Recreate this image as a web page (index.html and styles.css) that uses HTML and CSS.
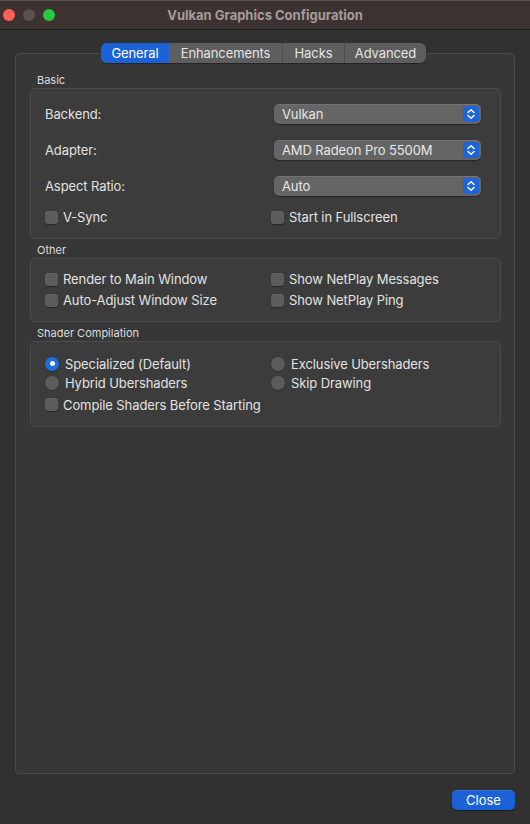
FILE: index.html
```html
<!DOCTYPE html>
<html lang="en">
<head>
<meta charset="utf-8">
<title>Vulkan Graphics Configuration</title>
<link rel="stylesheet" href="styles.css">
</head>
<body>
<div class="window">
  <header class="titlebar">
    <div class="lights">
      <span class="light red"></span>
      <span class="light gray"></span>
      <span class="light green"></span>
    </div>
    <div class="title">Vulkan Graphics Configuration</div>
    <div class="spacer"></div>
  </header>
  <main class="content">
    <nav class="tabs">
      <span class="tab tab-general active">General</span>
      <span class="tab tab-enh">Enhancements</span>
      <span class="tab tab-hacks">Hacks</span>
      <span class="tab tab-adv">Advanced</span>
    </nav>
    <section class="tabbox">
      <div class="group-label first">Basic</div>
      <div class="group basic">
        <div class="field-row">
          <span class="label">Backend:</span>
          <div class="popup"><span class="popup-text">Vulkan</span><span class="stepper"><svg viewBox="0 0 16 16" width="16" height="16"><path d="M5 6.5 L8 3.8 L11 6.5 M5 9.5 L8 12.2 L11 9.5" fill="none" stroke="#fff" stroke-width="1.5" stroke-linecap="round" stroke-linejoin="round"/></svg></span></div>
        </div>
        <div class="field-row">
          <span class="label">Adapter:</span>
          <div class="popup"><span class="popup-text">AMD Radeon Pro 5500M</span><span class="stepper"><svg viewBox="0 0 16 16" width="16" height="16"><path d="M5 6.5 L8 3.8 L11 6.5 M5 9.5 L8 12.2 L11 9.5" fill="none" stroke="#fff" stroke-width="1.5" stroke-linecap="round" stroke-linejoin="round"/></svg></span></div>
        </div>
        <div class="field-row">
          <span class="label">Aspect Ratio:</span>
          <div class="popup"><span class="popup-text">Auto</span><span class="stepper"><svg viewBox="0 0 16 16" width="16" height="16"><path d="M5 6.5 L8 3.8 L11 6.5 M5 9.5 L8 12.2 L11 9.5" fill="none" stroke="#fff" stroke-width="1.5" stroke-linecap="round" stroke-linejoin="round"/></svg></span></div>
        </div>
        <div class="check-row vsync-row">
          <label class="option"><span class="checkbox"></span><span>V-Sync</span></label>
          <label class="option"><span class="checkbox"></span><span>Start in Fullscreen</span></label>
        </div>
      </div>

      <div class="group-label">Other</div>
      <div class="group other">
        <div class="check-row">
          <label class="option"><span class="checkbox"></span><span>Render to Main Window</span></label>
          <label class="option"><span class="checkbox"></span><span>Show NetPlay Messages</span></label>
        </div>
        <div class="check-row">
          <label class="option"><span class="checkbox"></span><span>Auto-Adjust Window Size</span></label>
          <label class="option"><span class="checkbox"></span><span>Show NetPlay Ping</span></label>
        </div>
      </div>

      <div class="group-label">Shader Compilation</div>
      <div class="group shader">
        <div class="radio-row">
          <label class="option"><span class="radio checked"></span><span>Specialized (Default)</span></label>
          <label class="option"><span class="radio"></span><span>Exclusive Ubershaders</span></label>
        </div>
        <div class="radio-row">
          <label class="option"><span class="radio"></span><span>Hybrid Ubershaders</span></label>
          <label class="option"><span class="radio"></span><span>Skip Drawing</span></label>
        </div>
        <div class="radio-row compile-row">
          <label class="option"><span class="checkbox"></span><span>Compile Shaders Before Starting</span></label>
        </div>
      </div>
    </section>
    <footer class="footer">
      <button class="btn-close" type="button">Close</button>
    </footer>
  </main>
</div>
</body>
</html>
```

FILE: styles.css
```css
* {
  box-sizing: border-box;
}

html, body {
  margin: 0;
  padding: 0;
  background: #313131;
}

body {
  font-family: Inter, "Noto Sans", "Liberation Sans", sans-serif;
  font-size: 13px;
  color: #e2e2e2;
  letter-spacing: -0.1px;
}

.window {
  width: 530px;
  height: 824px;
  background: #313131;
  display: flex;
  flex-direction: column;
  overflow: hidden;
}

.titlebar {
  height: 30px;
  flex: 0 0 30px;
  background: #3c3232;
  border-top: 1px solid #5a5252;
  border-bottom: 1px solid #1c1a1a;
  display: grid;
  grid-template-columns: 1fr auto 1fr;
  align-items: center;
}

.lights {
  display: flex;
  gap: 8px;
  padding-left: 3px;
  align-items: center;
}

.light {
  width: 12px;
  height: 12px;
  border-radius: 50%;
  display: block;
}

.light.red { background: #fe5f57; }
.light.gray { background: #5a5150; }
.light.green { background: #2ac940; }

.title {
  font-weight: 700;
  font-size: 13px;
  color: #a69c9b;
  letter-spacing: 0;
}

.content {
  flex: 1;
  display: flex;
  flex-direction: column;
  padding: 13px 15px 14px 15px;
}

.tabs {
  display: flex;
  align-self: center;
  height: 20px;
  margin-left: -3px;
  margin-bottom: -10px;
  position: relative;
  z-index: 1;
  border-radius: 6px;
  overflow: hidden;
  background: #5e5e5e;
  box-shadow: 0 0.5px 1px rgba(0, 0, 0, 0.35);
}

.tab {
  display: flex;
  align-items: center;
  justify-content: center;
  height: 20px;
  color: #e4e4e4;
  font-size: 13px;
  border-left: 1px solid #4d4d4d;
}

.tab:first-child {
  border-left: none;
}

.tab + .tab.tab-enh {
  border-left: none;
}

.tab-general { width: 68px; }
.tab-enh { width: 113px; }
.tab-hacks { width: 62px; }
.tab-adv { width: 82px; }

.tab.active {
  background: #1b62d7;
  color: #ffffff;
}

.tabbox {
  flex: 1;
  background: #373737;
  border: 1px solid #4a4a4a;
  border-radius: 4px;
  padding: 19px 13px 0 14px;
  display: flex;
  flex-direction: column;
}

.group-label {
  font-size: 11px;
  line-height: 14px;
  height: 14px;
  padding-left: 7px;
  margin-top: 4px;
  margin-bottom: 1px;
  color: #dcdcdc;
  letter-spacing: 0;
}

.group-label.first {
  margin-top: 0;
}

.group {
  background: #3c3c3c;
  border: 1px solid #4b4b4b;
  border-radius: 5px;
  display: flex;
  flex-direction: column;
}

.basic {
  padding: 15px 0 11px 14px;
  gap: 16px;
}

.basic .vsync-row {
  margin-top: -5px;
}

.other {
  padding: 10px 0 11px 14px;
  gap: 1px;
}

.shader {
  padding: 12px 0 12px 14px;
}

.compile-row {
  margin-top: 3px;
}

.field-row {
  display: grid;
  grid-template-columns: 229px 207px;
  align-items: center;
  height: 20px;
}

.label {
  font-size: 13px;
  color: #e2e2e2;
}

.popup {
  height: 20px;
  border-radius: 5px;
  background: #656565;
  box-shadow: inset 0 0.5px 0 rgba(255, 255, 255, 0.18), 0 0.5px 1px rgba(0, 0, 0, 0.4);
  display: flex;
  align-items: center;
  justify-content: space-between;
  padding: 0 2px 0 8px;
}

.popup-text {
  color: #e6e6e6;
  font-size: 13px;
}

.stepper {
  width: 16px;
  height: 16px;
  border-radius: 4px;
  background: #1d63d9;
  display: flex;
  align-items: center;
  justify-content: center;
}

.stepper svg {
  display: block;
}

.check-row {
  display: grid;
  grid-template-columns: 226px 1fr;
  align-items: center;
  height: 20px;
}

.radio-row {
  display: grid;
  grid-template-columns: 226px 1fr;
  align-items: center;
  height: 19px;
}

.option {
  display: flex;
  align-items: center;
  gap: 5px;
  font-size: 13px;
  color: #e2e2e2;
  white-space: nowrap;
}

.checkbox {
  width: 13px;
  height: 13px;
  border-radius: 3px;
  background: #5c5c5c;
  box-shadow: inset 0 0.5px 0 rgba(255, 255, 255, 0.12), 0 0.5px 1px rgba(0, 0, 0, 0.35);
  flex: 0 0 13px;
}

.radio {
  width: 14px;
  height: 14px;
  border-radius: 50%;
  background: #5c5c5c;
  box-shadow: 0 0.5px 1px rgba(0, 0, 0, 0.35);
  flex: 0 0 14px;
  margin-right: 1px;
  display: flex;
  align-items: center;
  justify-content: center;
}

.radio.checked {
  background: #1d6ee0;
}

.radio.checked::after {
  content: "";
  width: 5px;
  height: 5px;
  border-radius: 50%;
  background: #ffffff;
}

.footer {
  display: flex;
  justify-content: flex-end;
  margin-top: 16px;
}

.btn-close {
  width: 63px;
  height: 20px;
  border: none;
  border-radius: 5px;
  background: #1b62d7;
  color: #ffffff;
  font-family: Inter, "Noto Sans", "Liberation Sans", sans-serif;
  font-size: 13px;
  padding: 0;
  margin-right: 0;
  box-shadow: inset 0 0.5px 0 rgba(255, 255, 255, 0.2), 0 0.5px 1px rgba(0, 0, 0, 0.4);
}
```
